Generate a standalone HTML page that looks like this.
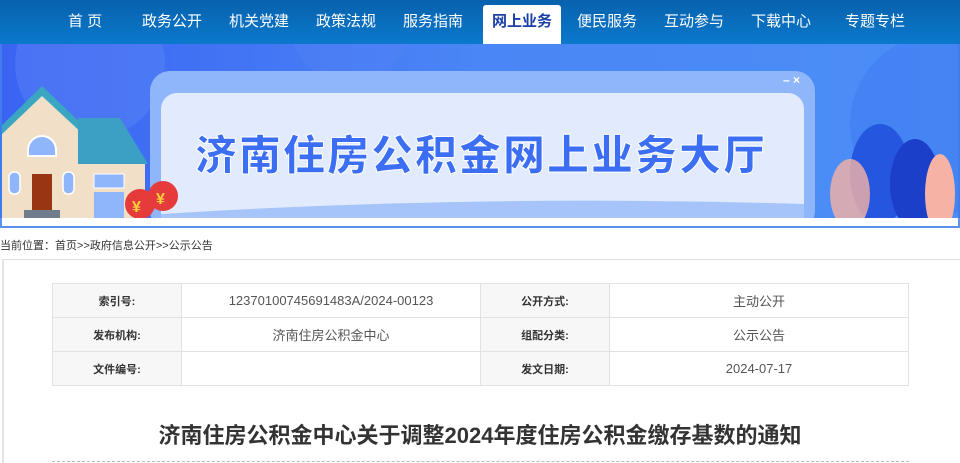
<!DOCTYPE html>
<html><head><meta charset="utf-8"><style>
*{margin:0;padding:0;box-sizing:border-box}
html,body{width:960px;height:463px;overflow:hidden}
body{background:#fff;font-family:"Liberation Sans","Noto Sans CJK SC",sans-serif;position:relative}
.nav{position:absolute;left:0;top:0;width:960px;height:44px;background:linear-gradient(#0862ad,#0a78cc)}
.nav span{position:absolute;top:12px;color:#fff;font-size:15px;line-height:20px;white-space:nowrap}
.nav .act{background:#fff;color:#1a3fa6;top:5px;height:39px;padding-top:7px;width:78px;text-align:center;border-radius:3px 3px 0 0;font-weight:bold}
.ban{position:absolute;left:0;top:44px;width:960px;height:174px;background:linear-gradient(90deg,#3a63f2,#4a86f5 50%,#4b8ef6);overflow:hidden;border-left:2px solid #3f7cf0;border-right:2px solid #3f7cf0}
.strip{position:absolute;left:0;top:218px;width:960px;height:10px;background:#fff;border-left:2px solid #5a92f0;border-right:2px solid #5a92f0;border-bottom:2px solid #5a92f0}
.crumb{position:absolute;left:0;top:237px;font-size:11px;color:#333}
.box{position:absolute;left:2px;top:259px;width:960px;height:204px;border-top:1px solid #ddd;border-left:2px solid #e4e4e4}
table{position:absolute;left:52px;top:283px;width:857px;border-collapse:collapse;font-size:13px;color:#555}
td{border:1px solid #e2e2e2;height:34px;text-align:center}
td.l{background:#f7f7f7;font-weight:bold;font-size:11px;color:#333;width:129px}
td.v{width:299px}
h1{position:absolute;left:0;width:960px;top:421px;text-align:center;font-size:22px;line-height:30px;color:#333;font-weight:bold;white-space:nowrap}
.dash{position:absolute;left:52px;top:461px;width:857px;border-top:1px dashed #bbb}
</style></head><body>
<div class="nav">
<span style="left:68px">首 页</span>
<span style="left:142px">政务公开</span>
<span style="left:229px">机关党建</span>
<span style="left:316px">政策法规</span>
<span style="left:403px">服务指南</span>
<span class="act" style="left:483px">网上业务</span>
<span style="left:577px">便民服务</span>
<span style="left:664px">互动参与</span>
<span style="left:751px">下载中心</span>
<span style="left:845px">专题专栏</span>
</div>
<div class="ban">
<svg width="960" height="174" style="position:absolute;left:-2px;top:0">
<circle cx="90" cy="20" r="75" fill="#5a84f6" opacity=".45"/>
<circle cx="350" cy="-20" r="60" fill="#5a84f6" opacity=".3"/>
<circle cx="940" cy="80" r="90" fill="#3d7af0" opacity=".5"/>
<rect x="150" y="27" width="665" height="160" rx="20" fill="#8fb6fb"/>
<rect x="161" y="49" width="643" height="140" rx="16" fill="#e1ebfd"/>
<path d="M161 170 Q480 150 804 160 V174 H161Z" fill="#a7c4fa"/>
<text x="783" y="40" fill="#fff" font-size="12" font-weight="bold">– ×</text>
<text x="195" y="126" font-family="Noto Sans CJK SC,sans-serif" font-weight="900" font-size="42" fill="#3b6ef3" stroke="#fff" stroke-width="1" letter-spacing="2">济南住房公积金网上业务大厅</text>
<polygon points="0,85 42,45 85,85 85,174 0,174" fill="#f1dfc7"/>
<polygon points="-5,88 42,42 90,88 85,92 42,52 0,92" fill="#3aa6c2"/>
<polygon points="78,74 120,74 148,120 78,120" fill="#3c9fc4"/>
<rect x="83" y="120" width="62" height="54" fill="#f1dfc7"/>
<rect x="32" y="130" width="20" height="38" fill="#9a3514"/>
<path d="M28 106 A14 14 0 0 1 56 106 V112 H28Z" fill="#8fb6fb" stroke="#fff" stroke-width="2"/>
<rect x="9" y="128" width="11" height="22" rx="5" fill="#8fb6fb" stroke="#fff" stroke-width="1.5"/>
<rect x="63" y="128" width="11" height="22" rx="5" fill="#8fb6fb" stroke="#fff" stroke-width="1.5"/>
<rect x="94" y="130" width="30" height="14" fill="#8fb6fb" stroke="#fff"/>
<rect x="94" y="148" width="30" height="26" fill="#8fb6fb"/>
<rect x="24" y="166" width="36" height="8" fill="#6e7c8c"/>
<circle cx="140" cy="160" r="15" fill="#e53b3b"/>
<circle cx="163" cy="152" r="15" fill="#e53b3b"/>
<text x="132" y="168" fill="#ffd23a" font-size="16" font-weight="bold">¥</text>
<text x="156" y="160" fill="#ffd23a" font-size="16" font-weight="bold">¥</text>
<ellipse cx="880" cy="130" rx="30" ry="50" fill="#2456e0"/>
<ellipse cx="915" cy="140" rx="25" ry="45" fill="#1b3fc9"/>
<ellipse cx="850" cy="150" rx="20" ry="35" fill="#f6b3a5" opacity=".8"/>
<ellipse cx="940" cy="150" rx="15" ry="40" fill="#f6b3a5"/>
</svg>
</div>
<div class="strip"></div>
<div class="crumb">当前位置：首页&gt;&gt;政府信息公开&gt;&gt;公示公告</div>
<div class="box"></div>
<table>
<tr><td class="l">索引号:</td><td class="v">12370100745691483A/2024-00123</td><td class="l">公开方式:</td><td class="v">主动公开</td></tr>
<tr><td class="l">发布机构:</td><td class="v">济南住房公积金中心</td><td class="l">组配分类:</td><td class="v">公示公告</td></tr>
<tr><td class="l">文件编号:</td><td class="v"></td><td class="l">发文日期:</td><td class="v">2024-07-17</td></tr>
</table>
<h1>济南住房公积金中心关于调整2024年度住房公积金缴存基数的通知</h1>
<div class="dash"></div>
</body></html>
